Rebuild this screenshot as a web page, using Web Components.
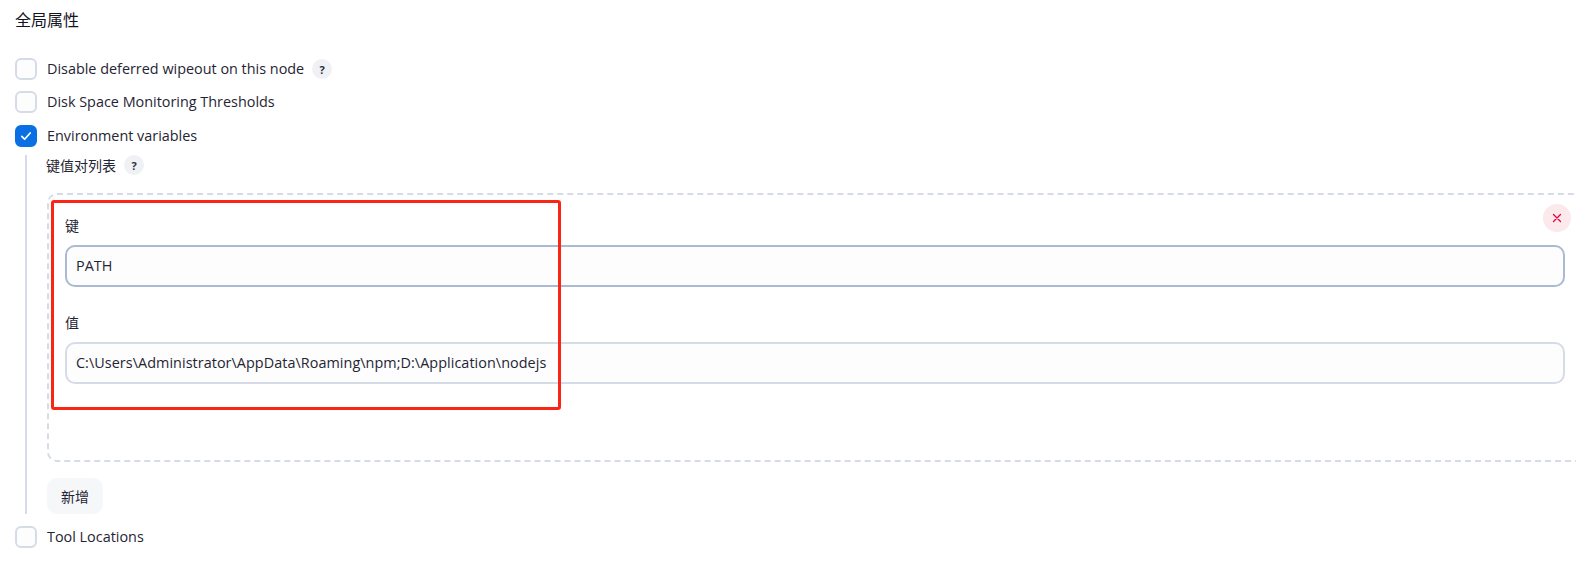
<!DOCTYPE html>
<html lang="zh">
<head>
<meta charset="utf-8">
<title>全局属性</title>
<style>
    html, body { margin: 0; padding: 0; background: #fff; overflow: hidden; }
    body {
        height: 562px;
        font-family: "Open Sans", "Noto Sans CJK SC", sans-serif;
        font-size: 14.4px;
        color: #1f2533;
    }
</style>
</head>
<body>
<global-props>
    <span slot="title">全局属性</span>
    <jk-checkbox style="margin-top:27px">Disable deferred wipeout on this node<jk-help slot="help"></jk-help></jk-checkbox>
    <jk-checkbox style="margin-top:11px">Disk Space Monitoring Thresholds</jk-checkbox>
    <jk-checkbox checked style="margin-top:12px">Environment variables</jk-checkbox>
    <jk-optional>
        <jk-label>键值对列表<jk-help slot="help"></jk-help></jk-label>
        <jk-chunk>
            <jk-field label="键" value="PATH" active></jk-field>
            <jk-field label="值" value="C:\Users\Administrator\AppData\Roaming\npm;D:\Application\nodejs"></jk-field>
        </jk-chunk>
        <jk-add>新增</jk-add>
    </jk-optional>
    <jk-checkbox style="margin-top:12px">Tool Locations</jk-checkbox>
</global-props>
<red-mark></red-mark>

<script>
class GlobalProps extends HTMLElement {
    connectedCallback() {
        this.attachShadow({ mode: 'open' });
        this.shadowRoot.innerHTML = `
            <style>
                :host { display: block; padding: 0 0 0 15px; }
                .title { font-size: 16px; line-height: 22px; padding-top: 9px; color: #14141f; }
            </style>
            <div class="title"><slot name="title"></slot></div>
            <slot></slot>
        `;
    }
}

class JkCheckbox extends HTMLElement {
    connectedCallback() {
        this.attachShadow({ mode: 'open' });
        const on = this.hasAttribute('checked');
        this.shadowRoot.innerHTML = `
            <style>
                :host { display: flex; align-items: center; height: 22px; }
                .box {
                    box-sizing: border-box;
                    width: 22px;
                    height: 22px;
                    border-radius: 6px;
                    border: 2px solid #d5dbe7;
                    background: #fdfdfe;
                    margin-right: 10px;
                    flex: none;
                    display: flex;
                    align-items: center;
                    justify-content: center;
                }
                .box.on { background: #0b6fe4; border-color: #0b6fe4; }
                .text { line-height: 20px; margin-top: -1px; }
                svg { display: block; }
            </style>
            <div class="box ${on ? 'on' : ''}">
                ${on ? '<svg width="12" height="12" viewBox="0 0 12 12"><path d="M1.8 6.4 4.6 9.2 10.2 3" fill="none" stroke="#fff" stroke-width="1.7" stroke-linecap="round" stroke-linejoin="round"/></svg>' : ''}
            </div>
            <span class="text"><slot></slot></span>
            <slot name="help"></slot>
        `;
    }
}

class JkHelp extends HTMLElement {
    connectedCallback() {
        this.attachShadow({ mode: 'open' });
        this.shadowRoot.innerHTML = `
            <style>
                :host {
                    display: inline-flex;
                    align-items: center;
                    justify-content: center;
                    width: 20px;
                    height: 20px;
                    border-radius: 50%;
                    background: #eff1f5;
                    color: #2a3040;
                    font-size: 11px;
                    font-weight: 700;
                    margin-left: 8px;
                    flex: none;
                }
            </style>?
        `;
    }
}

class JkOptional extends HTMLElement {
    connectedCallback() {
        this.attachShadow({ mode: 'open' });
        this.shadowRoot.innerHTML = `
            <style>
                :host {
                    display: block;
                    margin: 8px 0 0 10px;
                    padding: 0 0 0 19px;
                    border-left: 2px solid #d5dbe7;
                    height: 359px;
                }
            </style>
            <slot></slot>
        `;
    }
}

class JkLabel extends HTMLElement {
    connectedCallback() {
        this.attachShadow({ mode: 'open' });
        this.shadowRoot.innerHTML = `
            <style>
                :host { display: flex; align-items: center; height: 20px; font-size: 14px; }
            </style>
            <slot></slot><slot name="help"></slot>
        `;
    }
}

class JkChunk extends HTMLElement {
    connectedCallback() {
        this.attachShadow({ mode: 'open' });
        this.shadowRoot.innerHTML = `
            <style>
                :host {
                    display: block;
                    position: relative;
                    box-sizing: border-box;
                    height: 269px;
                    margin: 18px -40px 0 1px;
                    padding: 21px 49px 0 16px;
                    border: 2px dashed #d5dbe7;
                    border-radius: 10px;
                }
                .del {
                    position: absolute;
                    top: 9px;
                    right: 43px;
                    width: 28px;
                    height: 28px;
                    border-radius: 50%;
                    background: #fce9ec;
                    display: flex;
                    align-items: center;
                    justify-content: center;
                }
            </style>
            <div class="del">
                <svg width="10" height="10" viewBox="0 0 10 10"><path d="M1.5 1.5 8.5 8.5M8.5 1.5 1.5 8.5" stroke="#e6003c" stroke-width="1.3" stroke-linecap="round"/></svg>
            </div>
            <slot></slot>
        `;
    }
}

class JkField extends HTMLElement {
    connectedCallback() {
        this.attachShadow({ mode: 'open' });
        const active = this.hasAttribute('active');
        this.shadowRoot.innerHTML = `
            <style>
                :host { display: block; margin-bottom: 26px; }
                .label { font-size: 14px; line-height: 20px; margin-bottom: 9px; }
                .input {
                    box-sizing: border-box;
                    height: 42px;
                    padding: 0 9px 2px;
                    border: 2px solid ${active ? '#a9bad2' : '#d5dbe7'};
                    border-radius: 10px;
                    background: #fdfdfe;
                    display: flex;
                    align-items: center;
                    white-space: nowrap;
                    letter-spacing: 0.05px;
                }
            </style>
            <div class="label">${this.getAttribute('label')}</div>
            <div class="input">${this.getAttribute('value')}</div>
        `;
    }
}

class JkAdd extends HTMLElement {
    connectedCallback() {
        this.attachShadow({ mode: 'open' });
        this.shadowRoot.innerHTML = `
            <style>
                :host {
                    display: flex;
                    align-items: center;
                    justify-content: center;
                    width: 56px;
                    height: 36px;
                    margin: 16px 0 0 1px;
                    border-radius: 10px;
                    background: #f6f7f9;
                    font-size: 14px;
                }
            </style>
            <slot></slot>
        `;
    }
}

// annotation drawn over the screenshot, not part of the form
class RedMark extends HTMLElement {
    connectedCallback() {
        this.attachShadow({ mode: 'open' });
        this.shadowRoot.innerHTML = `
            <style>
                :host {
                    position: absolute;
                    left: 51px;
                    top: 200px;
                    box-sizing: border-box;
                    width: 510px;
                    height: 210px;
                    border: 3px solid #fb2516;
                    border-radius: 3px;
                }
            </style>
        `;
    }
}

customElements.define('global-props', GlobalProps);
customElements.define('jk-checkbox', JkCheckbox);
customElements.define('jk-help', JkHelp);
customElements.define('jk-optional', JkOptional);
customElements.define('jk-label', JkLabel);
customElements.define('jk-chunk', JkChunk);
customElements.define('jk-field', JkField);
customElements.define('jk-add', JkAdd);
customElements.define('red-mark', RedMark);
</script>
</body>
</html>
